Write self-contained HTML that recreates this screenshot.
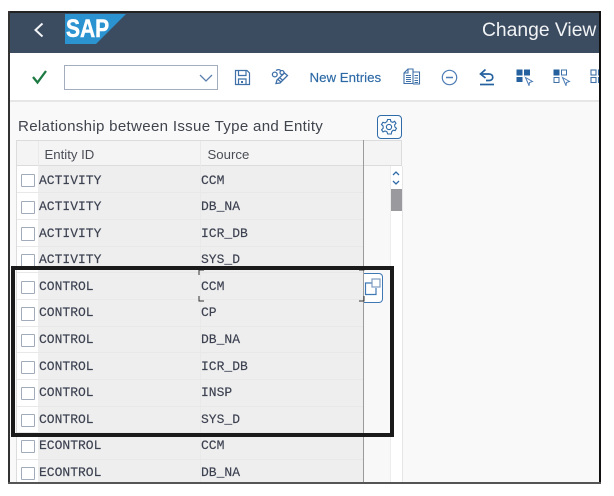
<!DOCTYPE html>
<html><head><meta charset="utf-8">
<style>
html,body{margin:0;padding:0;background:#fff}
body{width:614px;height:496px;position:relative;overflow:hidden;font-family:"Liberation Sans",sans-serif}
#w{position:absolute;left:0;top:0;width:614px;height:496px;filter:blur(.35px);background:#fff}
.a{position:absolute}
.m{position:absolute;font-family:"Liberation Mono",monospace;font-size:13px;color:#3c4150;line-height:14px;white-space:pre;-webkit-text-stroke:.15px #3c4150}
.cb{position:absolute;left:21px;width:11.5px;height:11.5px;border:1px solid #a2abb9;background:#fff;border-radius:1px;margin-top:-.5px}
.wc{position:absolute;left:17px;width:21px;background:#fff}
.hl{position:absolute;left:17px;width:346px;height:1px;background:#e8e8e8}
</style></head><body><div id="w">
<div class="a" style="left:8px;top:11px;width:591px;height:471px;background:#f9f9f9;overflow:hidden"></div>

<!-- header -->
<div class="a" style="left:9px;top:12px;width:590px;height:41px;background:#3b4b60"></div>
<svg class="a" style="left:30px;top:20px" width="20" height="20" viewBox="0 0 20 20"><path d="M12.5 3.5 L5.5 10 L12.5 16.5" fill="none" stroke="#f2f4f7" stroke-width="2"/></svg>
<svg class="a" style="left:65px;top:14px" width="62" height="31" viewBox="0 0 62 31"><path d="M0 0H61L31 30H0Z" fill="#2b93d0"/></svg>
<div class="a" style="left:66px;top:15px;font-size:25px;font-weight:bold;color:#fff;line-height:28px;transform:scaleX(.84);transform-origin:0 0;-webkit-text-stroke:.5px #fff">SAP</div>
<div class="a" style="left:482px;top:19px;font-size:19.3px;color:#f1f3f5;line-height:24px;white-space:nowrap">Change View</div>

<!-- toolbar -->
<div class="a" style="left:9px;top:53px;width:590px;height:47px;background:#fff"></div>
<div class="a" style="left:9px;top:100px;width:590px;height:2px;background:#e6e6e6"></div>
<svg class="a" style="left:30px;top:68px" width="20" height="18" viewBox="0 0 20 18"><path d="M3 9 L7.5 14.5 L16 3" fill="none" stroke="#1c7a42" stroke-width="2.3"/></svg>
<div class="a" style="left:64px;top:65px;width:152px;height:23px;border:1px solid #a3adbd;background:#fff"></div>
<svg class="a" style="left:198px;top:72px" width="16" height="12" viewBox="0 0 16 12"><path d="M2 3 L8 9 L14 3" fill="none" stroke="#5c80ad" stroke-width="1.3"/></svg>

<svg class="a" style="left:234px;top:69px" width="17" height="17" viewBox="0 0 17 17" fill="none" stroke="#3f70a8" stroke-width="1.2"><path d="M1.5 1.5H13L15.5 4V15.5H1.5Z"/><path d="M4.5 1.5V6.5H12V1.5"/><path d="M4.5 15.5V10H12V15.5"/><rect x="7" y="12" width="2" height="2" fill="#3f70a8" stroke="none"/></svg>
<svg class="a" style="left:271px;top:68px" width="18" height="18" viewBox="0 0 18 18" fill="none" stroke="#3f70a8" stroke-width="1.3"><circle cx="3.8" cy="6.5" r="2.4"/><path d="M5 2.5C7 1 9 1.5 10 3"/><circle cx="11" cy="4.5" r="2"/><path d="M5 15.5L6 12L13.5 5L16.5 7.5L9 15Z"/><path d="M7 11.5L10 14M9 10L12 12.5"/></svg>
<div class="a" style="left:309.5px;top:70px;font-size:13.3px;color:#2d6aa6;line-height:16px;white-space:nowrap;-webkit-text-stroke:.15px #2d6aa6">New Entries</div>
<svg class="a" style="left:403px;top:68px" width="18" height="18" viewBox="0 0 18 18" fill="none" stroke="#3f70a8" stroke-width="1.1"><path d="M1 15.5V5L5 1H10V15.5Z"/><path d="M1 5H5V1"/><path d="M3 7.5H8M3 9.5H8M3 11.5H8M3 13.5H8"/><path d="M10 4H16.5V16H10"/><path d="M11.5 7.5H15M11.5 10H15M11.5 12.5H15M11.5 14.5H15"/></svg>
<svg class="a" style="left:441px;top:69px" width="17" height="17" viewBox="0 0 17 17" fill="none" stroke="#4d7db5" stroke-width="1.2"><circle cx="8.5" cy="8.5" r="7.2"/><path d="M5 8.5H12" stroke-width="1.5"/></svg>
<svg class="a" style="left:478px;top:68px" width="18" height="18" viewBox="0 0 18 18" fill="none" stroke="#24619e" stroke-width="1.7"><path d="M7.5 1.5L2.5 6L7.5 10"/><path d="M3 6H11C16 6 16 12.5 11 12.5H8"/><path d="M2 16.5H16"/></svg>
<svg class="a" style="left:516px;top:69px" width="18" height="17" viewBox="0 0 18 17"><g fill="#24619e"><rect x="0.5" y="0.5" width="6" height="6"/><rect x="8" y="0.5" width="6" height="6"/><rect x="0.5" y="8" width="6" height="5"/></g><path d="M9.5 8.5L16.5 12.5L13.5 13.5L13 16.5Z" fill="#fff" stroke="#4d7db5"/></svg>
<svg class="a" style="left:553px;top:69px" width="18" height="17" viewBox="0 0 18 17"><rect x="0.5" y="0.5" width="6" height="6" fill="#24619e"/><rect x="8.5" y="1" width="5" height="5" fill="#fff" stroke="#3f70a8"/><rect x="1" y="8.5" width="5" height="5" fill="#fff" stroke="#3f70a8"/><path d="M9.5 8.5L16.5 12.5L13.5 13.5L13 16.5Z" fill="#fff" stroke="#4d7db5"/></svg>
<svg class="a" style="left:590px;top:69px" width="9" height="17" viewBox="0 0 9 17" fill="none" stroke="#3f70a8" stroke-width="1.1"><rect x="1" y="1" width="5" height="5"/><rect x="1" y="8.5" width="5" height="5"/><rect x="8.5" y="1" width="5" height="5"/><rect x="8.5" y="8.5" width="5" height="5"/></svg>

<!-- title -->
<div class="a" style="left:18px;top:117px;font-size:15.1px;letter-spacing:.3px;color:#40444d;line-height:19px;white-space:nowrap">Relationship between Issue Type and Entity</div>
<div class="a" style="left:377px;top:115px;width:23px;height:22px;border:1px solid #2f6ba8;border-radius:4px;background:#fbfcfd"></div>
<svg class="a" style="left:380px;top:118px" width="18" height="18" viewBox="0 0 18 18" fill="none" stroke="#2f6ba8" stroke-width="1.1"><circle cx="9" cy="9" r="2.6"/><path d="M7.6 1.5H10.4L10.9 3.6L12.8 4.4L14.6 3.3L16 5.3L14.6 6.9L14.9 9L16.5 10.3L15.2 12.6L13.2 12.2L11.7 13.7L11.3 16H7.7L6.9 13.8L5 13L3 13.9L1.6 11.8L3.2 10.2L3.1 8L1.5 6.6L2.9 4.3L5 4.9L6.9 3.6Z"/></svg>

<!-- table -->
<div class="a" style="left:16px;top:140px;width:386px;height:342px;background:#f8f8f8"></div>
<div class="a" style="left:16px;top:140px;width:347px;height:26px;background:#f4f4f4;border-top:1px solid #dcdcdc;border-bottom:1px solid #dcdcdc;box-sizing:border-box"></div>
<div class="a" style="left:363px;top:140px;width:39px;height:26px;background:#f4f4f4;border-top:1px solid #dcdcdc;border-right:1px solid #dcdcdc;border-bottom:1px solid #dcdcdc;box-sizing:border-box"></div>
<div class="a" style="left:16px;top:140px;width:1px;height:342px;background:#dcdcdc"></div>
<div class="a" style="left:38px;top:141px;width:1px;height:25px;background:#e9e9e9"></div>
<div class="a" style="left:200px;top:141px;width:1px;height:25px;background:#e9e9e9"></div>
<div class="a" style="left:44.5px;top:146.5px;font-size:13.2px;color:#4a4d55;line-height:15px">Entity ID</div>
<div class="a" style="left:207.5px;top:146.5px;font-size:13.2px;color:#4a4d55;line-height:15px">Source</div>

<div class="a" style="left:38px;top:166px;width:325px;height:316px;background:#eeeeee"></div>
<div class="wc" style="top:166px;height:316px"></div>
<div class="a" style="left:200px;top:166px;width:1px;height:316px;background:#e9e9e9"></div>
<div class="hl" style="top:192px"></div><div class="hl" style="top:219px"></div><div class="hl" style="top:246px"></div><div class="hl" style="top:272px"></div><div class="hl" style="top:299px"></div><div class="hl" style="top:326px"></div><div class="hl" style="top:352px"></div><div class="hl" style="top:379px"></div><div class="hl" style="top:406px"></div><div class="hl" style="top:432px"></div><div class="hl" style="top:459px"></div>
<div class="a" style="left:363px;top:140px;width:1px;height:342px;background:#9b9b9b"></div>

<!-- scrollbar -->
<div class="a" style="left:390px;top:166px;width:12px;height:316px;background:#fff"></div>
<div class="a" style="left:390px;top:166px;width:1px;height:316px;background:#ececec"></div>
<div class="a" style="left:402px;top:166px;width:1px;height:316px;background:#e6e6e6"></div>
<svg class="a" style="left:391px;top:169px" width="10" height="18" viewBox="0 0 10 18" fill="none" stroke="#2f6ba8" stroke-width="1.3"><path d="M2 6L5 3L8 6"/><path d="M2 12L5 15L8 12"/></svg>
<div class="a" style="left:391px;top:189px;width:11px;height:22px;background:#9a9a9e"></div>

<!-- rows -->
<div class="cb" style="top:174px"></div><div class="m" style="left:39px;top:173.5px">ACTIVITY</div><div class="m" style="left:201px;top:173.5px">CCM</div>
<div class="cb" style="top:201px"></div><div class="m" style="left:39px;top:200px">ACTIVITY</div><div class="m" style="left:201px;top:200px">DB_NA</div>
<div class="cb" style="top:227.5px"></div><div class="m" style="left:39px;top:226.5px">ACTIVITY</div><div class="m" style="left:201px;top:226.5px">ICR_DB</div>
<div class="cb" style="top:254px"></div><div class="m" style="left:39px;top:253px">ACTIVITY</div><div class="m" style="left:201px;top:253px">SYS_D</div>
<div class="cb" style="top:281px"></div><div class="m" style="left:39px;top:279.5px">CONTROL</div><div class="m" style="left:201px;top:279.5px">CCM</div>
<div class="cb" style="top:307.5px"></div><div class="m" style="left:39px;top:306px">CONTROL</div><div class="m" style="left:201px;top:306px">CP</div>
<div class="cb" style="top:334px"></div><div class="m" style="left:39px;top:333px">CONTROL</div><div class="m" style="left:201px;top:333px">DB_NA</div>
<div class="cb" style="top:361px"></div><div class="m" style="left:39px;top:359.5px">CONTROL</div><div class="m" style="left:201px;top:359.5px">ICR_DB</div>
<div class="cb" style="top:387px"></div><div class="m" style="left:39px;top:386px">CONTROL</div><div class="m" style="left:201px;top:386px">INSP</div>
<div class="cb" style="top:414px"></div><div class="m" style="left:39px;top:412.5px">CONTROL</div><div class="m" style="left:201px;top:412.5px">SYS_D</div>
<div class="cb" style="top:440px"></div><div class="m" style="left:39px;top:439px">ECONTROL</div><div class="m" style="left:201px;top:439px">CCM</div>
<div class="cb" style="top:467px"></div><div class="m" style="left:39px;top:466px">ECONTROL</div><div class="m" style="left:201px;top:466px">DB_NA</div>

<!-- copy icon -->
<div class="a" style="left:364px;top:273px;width:18px;height:28px;background:#fff;border:1px solid #3f78b5;border-left:none;border-radius:0 4px 4px 0"></div>
<svg class="a" style="left:363px;top:277px" width="20" height="20" viewBox="0 0 20 20" fill="none" stroke="#3f78b5" stroke-width="1.2"><path d="M9 6H2.5V17.5H13V11"/><rect x="9" y="2" width="8" height="8" stroke="#7f9cc0" fill="#fff"/></svg>

<!-- focus corners -->
<svg class="a" style="left:198px;top:269px" width="170" height="34" viewBox="0 0 170 34" fill="none" stroke="#333" stroke-width="1"><path d="M1 6V1H6M161 1H166V0M1 27V32H6M161 32H166V27"/></svg>
</div>

<!-- black annotation box -->
<div class="a" style="left:11px;top:266px;width:383px;height:171px;border:4px solid #1a1a1a;box-sizing:border-box"></div>

<!-- frame -->
<div class="a" style="left:8px;top:11px;width:592px;height:1.5px;background:#222"></div>
<div class="a" style="left:8px;top:11px;width:1.5px;height:472px;background:#333"></div>
<div class="a" style="left:599px;top:11px;width:2px;height:472px;background:#111"></div>
<div class="a" style="left:8px;top:482px;width:593px;height:1.5px;background:#555"></div>
</body></html>
